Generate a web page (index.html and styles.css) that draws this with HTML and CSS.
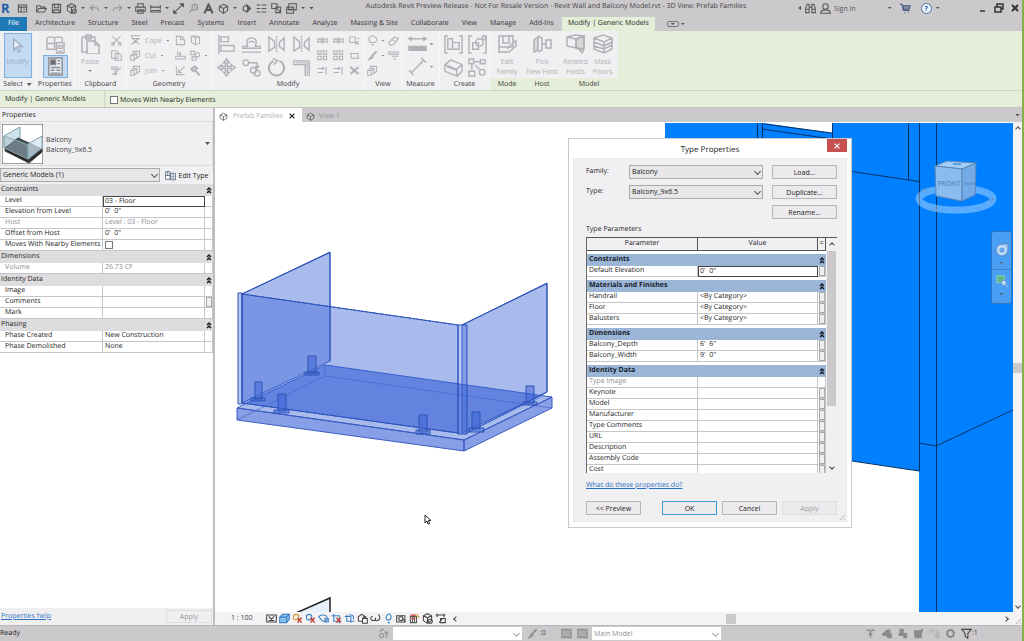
FILE: index.html
```
<!DOCTYPE html>
<html lang="en">
  <head>
    <meta charset="utf-8">
    <title>Autodesk Revit Preview Release</title>
    <link rel="stylesheet" href="styles.css">
  </head>

  <body>
    <!-- icon sheet -->
    <svg class="sheet" width="0" height="0">
      <symbol id="home" viewBox="0 0 16 16"><path d="M2 3h12v10H2zM2 6h12M6 6v7M9 9h3"/></symbol>
      <symbol id="open" viewBox="0 0 16 16"><path d="M1 13V4h5l1 2h6v2M1 13l3-5h11l-3 5z"/></symbol>
      <symbol id="save" viewBox="0 0 16 16"><path d="M2 2h12v12H2zM5 2v5h6V2M4 14v-4h8v4"/></symbol>
      <symbol id="sync" viewBox="0 0 16 16"><path d="M8 1l6 3v7l-6 4-6-4V4zM2 4l6 3 6-3M8 7v8"/><circle cx="12" cy="12" r="3"/></symbol>
      <symbol id="undo" viewBox="0 0 16 16"><path d="M6 3L2 7l4 4M2 7h8q4 0 4 5"/></symbol>
      <symbol id="redo" viewBox="0 0 16 16"><path d="M10 3l4 4-4 4M14 7H6q-4 0-4 5"/></symbol>
      <symbol id="print" viewBox="0 0 16 16"><path d="M4 6V1h8v5M1 6h14v6H1zM4 10h8v5H4z"/></symbol>
      <symbol id="dims" viewBox="0 0 16 16"><path d="M1 3v6M15 3v6M1 6h14M1 11h14v2H1z"/></symbol>
      <symbol id="line" viewBox="0 0 16 16"><path d="M3 13L13 3"/><path fill="currentColor" d="M1 11l4 4H1zM11 1h4v4z"/></symbol>
      <symbol id="tag" viewBox="0 0 16 16"><path d="M2 14l4-5M6 9V5q0-3 4-3t4 4-4 4H6zM10 5v3"/></symbol>
      <symbol id="text" viewBox="0 0 16 16"><path stroke-width="3" d="M2 15L8 2l6 13M4 10h8"/></symbol>
      <symbol id="cube" viewBox="0 0 16 16"><path d="M2 5l6-3 6 3v6l-6 4-6-4zM2 5l6 3 6-3M8 8v7"/></symbol>
      <symbol id="section" viewBox="0 0 16 16"><circle cx="7" cy="8" r="4"/><path fill="currentColor" d="M8 2l6 6-6 6 2-6z"/></symbol>
      <symbol id="thin" viewBox="0 0 16 16"><path d="M1 3h5M8 3h7M1 8h5M8 8h7M1 13h5M8 13h7"/></symbol>
      <symbol id="close" viewBox="0 0 16 16"><path d="M1 1h8v7H1zM7 6h7v8H7zM9 8l5 6"/></symbol>
      <symbol id="windows" viewBox="0 0 16 16"><path d="M4 1h11v9H4zM1 6h10v9H1zM1 9h10"/></symbol>
      <symbol id="binoc" viewBox="0 0 16 16"><path d="M1 14V8l2-6h3v12zM15 14V8l-2-6h-3v12zM6 6h4M1 9h5M10 9h5"/></symbol>
      <symbol id="user" viewBox="0 0 16 16"><circle cx="8" cy="5" r="4"/><path d="M1 15q0-4 5-5h4q5 1 5 5z"/></symbol>
      <symbol id="cart" viewBox="0 0 16 16"><path fill="currentColor" fill-opacity=".5" d="M4 4h11l-2 5H5z"/><path d="M0 2h3l2 9h9M6 14h1M12 14h1"/></symbol>
      <symbol id="cursor" viewBox="0 0 16 16"><path fill="#eef4fb" d="M4 1v12l3-3 2 5 2-1-2-5h4z"/></symbol>
      <symbol id="types" viewBox="0 0 20 20"><path d="M1 3q4-2 8 0 4-2 8 0v5M1 3v12h9M9 3v12M1 9h8M11 8h8v11h-8zM13 11h4v3h-4zM13 17h4"/></symbol>
      <symbol id="props" viewBox="0 0 20 20"><path fill="#e9eff6" d="M3 1h14v18H3z"/><path d="M5 3h5v5H5z" fill="#666"/><path d="M12 4h3M12 7h3M5 11h10M5 14h4M11 14h4M5 17h10"/></symbol>
      <symbol id="paste" viewBox="0 0 20 20"><path d="M2 3h13v4M2 3v15h5M6 1h5v4H6zM7 7h8l4 4v9H7zM15 7v4h4"/></symbol>
      <symbol id="cut" viewBox="0 0 16 16"><path d="M2 2l12 11M14 2L2 13"/><circle cx="3" cy="13" r="2"/><circle cx="13" cy="13" r="2"/></symbol>
      <symbol id="copy" viewBox="0 0 16 16"><path d="M1 1h7l2 2v9H1zM6 5h6l3 3v7H6z"/></symbol>
      <symbol id="match" viewBox="0 0 16 16"><path d="M1 3h8v3H1zM4 9h6M5 14l9-11M3 13l4-2 1 3z"/></symbol>
      <symbol id="cope" viewBox="0 0 16 16"><path d="M1 1h14M3 1v4l5 3-6 6M14 5L8 8l6 6M3 5h11M6 11h5"/></symbol>
      <symbol id="solid" viewBox="0 0 16 16"><path d="M1 8l4-3h5v6l-4 4H1zM5 5V2h9v7l-4 3M1 8h5v7M6 8l4-3"/></symbol>
      <symbol id="wallcut" viewBox="0 0 16 16"><path d="M2 2h6v5h6v7H2zM8 2l4 1v4"/></symbol>
      <symbol id="beam" viewBox="0 0 16 16"><path d="M4 1v5h4M1 9h14v4H1zM8 3v6"/></symbol>
      <symbol id="split" viewBox="0 0 16 16"><path d="M2 2v12h12M5 11l9-9M5 6v5h5"/></symbol>
      <symbol id="face" viewBox="0 0 16 16"><path d="M2 2l6 2v10l-6-3zM2 2l6-1 6 2v9l-6 2M8 4l6-1"/></symbol>
      <symbol id="shapes" viewBox="0 0 16 16"><path d="M1 2h6v5H1zM3 10h6v5H3z"/><circle cx="11" cy="7" r="3"/></symbol>
      <symbol id="hammer" viewBox="0 0 16 16"><path stroke-width="3" d="M2 6l5-4 3 3-5 4zM7 7l7 8"/></symbol>
      <symbol id="align" viewBox="0 0 20 20"><path d="M2 0v20M4 2h8v5H4zM4 11h14v6H4z"/></symbol>
      <symbol id="offset" viewBox="0 0 20 20"><path d="M0 12h6q-3-9 4-9t4 9h6v2H0zM0 18h20M7 8q3-3 6 0"/></symbol>
      <symbol id="mirror" viewBox="0 0 20 20"><path d="M2 2v15l6-4V7zM18 3v13l-5-4V8z"/><path stroke-dasharray="2 1" d="M10 1v18"/></symbol>
      <symbol id="move" viewBox="0 0 20 20"><path d="M10 1l3 4h-2v4h4V7l4 3-4 3v-2h-4v4h2l-3 4-3-4h2v-4H5v2l-4-3 4-3v2h4V5H7z"/></symbol>
      <symbol id="copy2" viewBox="0 0 20 20"><circle cx="4" cy="5" r="3"/><circle cx="12" cy="13" r="3"/><circle cx="16" cy="16" r="3"/><path d="M7 5h9v5M14 8l2 3 2-3"/></symbol>
      <symbol id="rotate" viewBox="0 0 20 20"><path stroke-width="2" d="M7 3a8 8 0 1 0 6 0"/><path d="M6 0l5 3-4 4"/></symbol>
      <symbol id="trim" viewBox="0 0 20 20"><path d="M1 3h17v16M1 7h13v12"/><path stroke-dasharray="2 1" d="M1 5h15v14"/></symbol>
      <symbol id="splitel" viewBox="0 0 16 16"><path d="M1 6h5v4H1zM10 6h5v4h-5zM8 3v10"/></symbol>
      <symbol id="array" viewBox="0 0 16 16"><path d="M1 1h5v5H1zM9 1h5v5H9zM1 9h5v5H1zM9 9h5v5H9z"/></symbol>
      <symbol id="extend" viewBox="0 0 16 16"><path d="M1 5h8M1 11h8M13 2v12M7 3l3 2-3 2"/></symbol>
      <symbol id="pin" viewBox="0 0 16 16"><path d="M1 3h8v8H1zM9 9l5 5M14 9l-5 5M11 5h4"/></symbol>
      <symbol id="scale" viewBox="0 0 16 16"><path d="M3 5h10v7H3zM1 5h2M13 12h2"/></symbol>
      <symbol id="del" viewBox="0 0 16 16"><path stroke-width="3" d="M2 3l12 10M14 3L2 13"/></symbol>
      <symbol id="bulb" viewBox="0 0 16 16"><path d="M5 11q-4-4-1-8t8 0-1 8zM6 14h4"/></symbol>
      <symbol id="brush" viewBox="0 0 16 16"><path stroke-width="3" d="M14 2L7 9"/><path d="M7 8l2 3-7 4z" fill="currentColor"/></symbol>
      <symbol id="eraser" viewBox="0 0 16 16"><path d="M1 11l8-8 6 2-6 8-6 2zM6 7l6 3"/></symbol>
      <symbol id="linework" viewBox="0 0 16 16"><path d="M1 3h14v3H1zM5 9h10M8 13h4"/></symbol>
      <symbol id="measure" viewBox="0 0 20 20"><path d="M1 4h18M4 2L1 4l3 2M16 2l3 2-3 2"/><path fill="currentColor" d="M1 12h18v4H1z"/></symbol>
      <symbol id="diag" viewBox="0 0 20 20"><path d="M3 17L17 3M1 14l5 5M14 1l5 5"/></symbol>
      <symbol id="assembly" viewBox="0 0 20 20"><path d="M4 1H1v18h3M16 1h3v18h-3M4 4h5v11H4zM9 8h7v7H9z"/></symbol>
      <symbol id="parts" viewBox="0 0 20 20"><path d="M4 1H1v18h3M16 1h3v18h-3M5 8h6v7H5z"/><circle cx="12" cy="8" r="4"/><circle cx="17" cy="3" r="2"/></symbol>
      <symbol id="box" viewBox="0 0 20 20"><path d="M1 7l6-5 12 5v7l-5 5-13-5zM1 7l12 5 6-5M13 12l1 7M3 9l11 4"/></symbol>
      <symbol id="similar" viewBox="0 0 20 20"><path d="M1 1h5v5H1zM13 2h5v4h-5zM1 14h6v5H1zM7 4h5M4 7v5M8 8l4 4"/><circle cx="15" cy="15" r="3"/></symbol>
      <symbol id="editfam" viewBox="0 0 20 20"><path d="M2 2h14v11H2zM6 2v7h6V2M2 13v5h10l7-6V6M10 15l8-8"/></symbol>
      <symbol id="host" viewBox="0 0 20 20"><path fill="currentColor" fill-opacity=".4" d="M2 6l4-3v13l-4 2z"/><path d="M6 2l4 2v12l-4 2M10 10h4"/><path d="M14 6h5v8h-5z"/></symbol>
      <symbol id="hosts" viewBox="0 0 20 20"><path d="M1 3l9 2 8-3v12l-3 2-5-2-9-2zM10 5v9M1 3l8-2 9 1"/><path fill="currentColor" fill-opacity=".4" d="M10 5l8-3v12l-3 1-5-2z"/><path d="M13 15l3 4 2-4"/></symbol>
      <symbol id="mass" viewBox="0 0 20 20"><path d="M1 4l9-3 9 3v11l-8 4-10-4zM1 4l10 4 8-4M11 8v11M1 8l10 4 8-4M1 12l10 3 8-4"/></symbol>
      <symbol id="edittype" viewBox="0 0 20 20"><path fill="#fff" d="M1 3h8v14H1zM10 6h9v12h-9z"/><path d="M1 10h8M12 9h5M12 12h5M12 15h5M5 3v7"/></symbol>
      <symbol id="up2" viewBox="0 0 8 8"><path d="M2 4l2-2 2 2M2 7l2-2 2 2"/></symbol>
      <symbol id="glasses" viewBox="0 0 16 16"><path d="M1 6q0 5 4 5t3-4q-1 5 3 4t3-7M1 6l3-1M12 2l2 2"/></symbol>
      <symbol id="crop" viewBox="0 0 16 16"><path d="M1 4h12v9H1zM9 8l5 5"/><circle cx="7" cy="8" r="3"/></symbol>
      <symbol id="select" viewBox="0 0 16 16"><path stroke-width="2" d="M2 4q5-3 6 2 1-5 6-2M8 6v8M5 9h6"/></symbol>
      <symbol id="worksets" viewBox="0 0 16 16"><circle cx="5" cy="11" r="3"/><path d="M3 6q0-4 6-4M9 6h6M12 6v8M12 8q2 0 3 2"/></symbol>
      <symbol id="blob" viewBox="0 0 16 16"><path fill="currentColor" d="M2 9l7-6h4v5l2 1v5h-5l-2-3H4z"/></symbol>
      <symbol id="blob2" viewBox="0 0 16 16"><path fill="currentColor" d="M4 2h5v6h5v6h-4v-3H3V8h2z"/></symbol>
      <symbol id="blob3" viewBox="0 0 16 16"><path fill="currentColor" d="M2 4h8l4-2-2 7v5H3z"/></symbol>
      <symbol id="grid" viewBox="0 0 16 16"><path fill="#a1a0a2" d="M1 2h14v12H1z"/><path stroke="#b5b4b6" d="M2 6h12M2 10h12"/></symbol>
      <symbol id="filter" viewBox="0 0 16 16"><path d="M1 2h14L10 8v7l-4-3V8z"/></symbol>
      <symbol id="gear" viewBox="0 0 16 16"><circle cx="8" cy="8" r="5" stroke-width="3"/></symbol>
    </svg>

    <div class="app">
      <header class="titlebar">
        <div class="qat">
          <b class="logo">R</b>
          <button aria-label="Home"><svg><use href="#home"/></svg></button>
          <i class="space"></i>
          <button aria-label="Open"><svg><use href="#open"/></svg></button>
          <button aria-label="Save"><svg><use href="#save"/></svg></button>
          <button aria-label="Sync"><svg><use href="#sync"/></svg></button>
          <i class="arrow"></i>
          <button class="faint" aria-label="Undo"><svg><use href="#undo"/></svg></button>
          <i class="arrow"></i>
          <button class="faint" aria-label="Redo"><svg><use href="#redo"/></svg></button>
          <i class="arrow"></i>
          <button aria-label="Print"><svg><use href="#print"/></svg></button>
          <button aria-label="Measure"><svg><use href="#dims"/></svg></button>
          <i class="arrow"></i>
          <button aria-label="Dimension"><svg><use href="#line"/></svg></button>
          <button class="faint" aria-label="Tag"><svg><use href="#tag"/></svg></button>
          <button aria-label="Text"><svg><use href="#text"/></svg></button>
          <button aria-label="3D view"><svg><use href="#cube"/></svg></button>
          <i class="arrow"></i>
          <button aria-label="Section"><svg><use href="#section"/></svg></button>
          <button aria-label="Thin lines"><svg><use href="#thin"/></svg></button>
          <button aria-label="Close hidden"><svg><use href="#close"/></svg></button>
          <button aria-label="Switch windows"><svg><use href="#windows"/></svg></button>
          <i class="arrow"></i>
          <i class="arrow wide"></i>
        </div>
        <div class="caption">Autodesk Revit Preview Release - Not For Resale Version - Revit Wall and Balcony Model.rvt - 3D View: Prefab Families</div>
        <div class="infocenter">
          <i class="arrow left"></i>
          <button aria-label="Search"><svg><use href="#binoc"/></svg></button>
          <button class="signin"><svg><use href="#user"/></svg>Sign In</button>
          <i class="arrow"></i>
          <button class="cart" aria-label="Store"><svg><use href="#cart"/></svg></button>
          <button class="help" aria-label="Help">?</button>
          <i class="arrow"></i>
        </div>
        <div class="winbtns">
          <button aria-label="Minimize"><svg viewBox="0 0 10 10"><path d="M2 8h5"/></svg></button>
          <button aria-label="Restore"><svg viewBox="0 0 10 10"><path d="M3 4V1h6v5H7M1 4h6v5H1z"/></svg></button>
          <button aria-label="Close"><svg viewBox="0 0 10 10"><path stroke-width="2" d="M2 2l6 6M8 2L2 8"/></svg></button>
        </div>
      </header>

      <nav class="tabs">
        <a class="file" href="#">File</a>
        <a href="#">Architecture</a>
        <a href="#">Structure</a>
        <a href="#">Steel</a>
        <a href="#">Precast</a>
        <a href="#">Systems</a>
        <a href="#">Insert</a>
        <a href="#">Annotate</a>
        <a href="#">Analyze</a>
        <a href="#">Massing &amp; Site</a>
        <a href="#">Collaborate</a>
        <a href="#">View</a>
        <a href="#">Manage</a>
        <a href="#">Add-Ins</a>
        <a class="active" href="#">Modify | Generic Models</a>
        <button class="cycle" aria-label="Cycle ribbon"><i class="arrow"></i></button>
        <i class="arrow"></i>
      </nav>

      <div class="ribbon">
        <section class="panel select">
          <div class="tools"><button class="tall on"><svg><use href="#cursor"/></svg>Modify</button></div>
          <h2>Select <i class="arrow wide"></i></h2>
        </section>
        <section class="panel properties">
          <div class="tools stack">
            <button class="big" aria-label="Type properties"><svg><use href="#types"/></svg></button>
            <button class="big on" aria-label="Properties"><svg><use href="#props"/></svg></button>
          </div>
          <h2>Properties</h2>
        </section>
        <section class="panel clipboard">
          <div class="tools">
            <button class="tall"><svg><use href="#paste"/></svg>Paste<i class="arrow"></i></button>
            <div class="col">
              <button aria-label="Cut"><svg><use href="#cut"/></svg></button>
              <button aria-label="Copy"><svg><use href="#copy"/></svg></button>
              <button aria-label="Match"><svg><use href="#match"/></svg></button>
            </div>
          </div>
          <h2>Clipboard</h2>
        </section>
        <section class="panel geometry">
          <div class="tools">
            <div class="col words">
              <button><svg><use href="#cope"/></svg>Cope<i class="arrow"></i></button>
              <button><svg><use href="#solid"/></svg>Cut<i class="arrow"></i></button>
              <button><svg><use href="#solid"/></svg>Join<i class="arrow"></i></button>
            </div>
            <div class="col">
              <button aria-label="Wall opening"><svg><use href="#wallcut"/></svg></button>
              <button aria-label="Beam joins"><svg><use href="#beam"/></svg></button>
              <button aria-label="Wall joins"><svg><use href="#split"/></svg></button>
            </div>
            <div class="col more">
              <button aria-label="Split face"><svg><use href="#face"/></svg></button>
              <button aria-label="Paint"><svg><use href="#shapes"/></svg><i class="arrow"></i></button>
              <button aria-label="Demolish"><svg><use href="#hammer"/></svg></button>
            </div>
          </div>
          <h2>Geometry</h2>
        </section>
        <section class="panel modify">
          <div class="tools">
            <div class="bigs">
              <button class="big" aria-label="Align"><svg><use href="#align"/></svg></button>
              <button class="big" aria-label="Offset"><svg><use href="#offset"/></svg></button>
              <button class="big" aria-label="Mirror axis"><svg><use href="#mirror"/></svg></button>
              <button class="big" aria-label="Mirror draw"><svg><use href="#mirror"/></svg></button>
              <button class="big" aria-label="Move"><svg><use href="#move"/></svg></button>
              <button class="big" aria-label="Copy"><svg><use href="#copy2"/></svg></button>
              <button class="big" aria-label="Rotate"><svg><use href="#rotate"/></svg></button>
              <button class="big" aria-label="Trim"><svg><use href="#trim"/></svg></button>
            </div>
            <div class="col">
              <button aria-label="Split"><svg><use href="#splitel"/></svg></button>
              <button aria-label="Array"><svg><use href="#array"/></svg></button>
              <button aria-label="Extend"><svg><use href="#extend"/></svg></button>
            </div>
            <div class="col">
              <button aria-label="Split with gap"><svg><use href="#splitel"/></svg></button>
              <button aria-label="Group"><svg><use href="#array"/></svg></button>
              <button aria-label="Extend many"><svg><use href="#extend"/></svg></button>
            </div>
            <div class="col">
              <button aria-label="Unpin"><svg><use href="#pin"/></svg></button>
              <button aria-label="Scale"><svg><use href="#scale"/></svg></button>
              <button aria-label="Delete"><svg><use href="#del"/></svg></button>
            </div>
          </div>
          <h2>Modify</h2>
        </section>
        <section class="panel view">
          <div class="tools">
            <div class="col more">
              <button aria-label="Hide"><svg><use href="#bulb"/></svg><i class="arrow"></i></button>
              <button aria-label="Override"><svg><use href="#brush"/></svg><i class="arrow"></i></button>
              <button aria-label="Displace"><svg><use href="#solid"/></svg></button>
            </div>
            <div class="col">
              <button aria-label="Selection box"><svg><use href="#eraser"/></svg></button>
              <button aria-label="Linework"><svg><use href="#linework"/></svg></button>
            </div>
          </div>
          <h2>View</h2>
        </section>
        <section class="panel measure">
          <div class="tools stack">
            <button class="big" aria-label="Measure"><svg><use href="#measure"/></svg><i class="arrow"></i></button>
            <button class="big" aria-label="Aligned"><svg><use href="#diag"/></svg><i class="arrow"></i></button>
          </div>
          <h2>Measure</h2>
        </section>
        <section class="panel create">
          <div class="tools">
            <div class="bigs">
              <button class="big" aria-label="Assembly"><svg><use href="#assembly"/></svg></button>
              <button class="big" aria-label="Parts"><svg><use href="#parts"/></svg></button>
              <button class="big" aria-label="Group"><svg><use href="#box"/></svg></button>
              <button class="big" aria-label="Similar"><svg><use href="#similar"/></svg></button>
            </div>
          </div>
          <h2>Create</h2>
        </section>
        <section class="panel context mode">
          <div class="tools"><button class="tall"><svg><use href="#editfam"/></svg>Edit<br>Family</button></div>
          <h2>Mode</h2>
        </section>
        <section class="panel context hostp">
          <div class="tools"><button class="tall"><svg><use href="#host"/></svg>Pick<br>New Host</button></div>
          <h2>Host</h2>
        </section>
        <section class="panel context model">
          <div class="tools">
            <button class="tall"><svg><use href="#hosts"/></svg>Related<br>Hosts</button>
            <button class="tall"><svg><use href="#mass"/></svg>Mass<br>Floors</button>
          </div>
          <h2>Model</h2>
        </section>
      </div>

      <div class="options">
        <span class="what">Modify | Generic Models</span>
        <label><input type="checkbox">Moves With Nearby Elements</label>
      </div>

      <main>
        <aside class="palette">
          <h3>Properties</h3>
          <button class="typesel">
            <svg class="thumb" viewBox="0 0 41 40">
              <path fill="#fff" d="M0 0h41v40H0z"/>
              <path fill="#cfe2ee" stroke="#7fa0b0" d="M2 12L18 3v13L2 24z"/>
              <path fill="#4d565f" stroke="#333" d="M3 24l13-10 24 11-13 11z"/>
              <path fill="#222" d="M3 24l24 12v3L3 27zM40 25L27 36v3l13-11z"/>
              <path fill="#9fb6c6" fill-opacity=".4" stroke="#8aa" d="M2 12l24 9v14L2 24z"/>
              <path fill="#cfe2ee" fill-opacity=".7" stroke="#7fa0b0" d="M26 20l14-8v12l-14 11z"/>
            </svg>
            <span>Balcony<br>Balcony_9x6.5</span>
            <i class="arrow wide"></i>
          </button>
          <div class="filterrow">
            <span class="drop"><select aria-label="Filter"><option>Generic Models (1)</option></select></span>
            <button><svg><use href="#edittype"/></svg>Edit Type</button>
          </div>
          <table class="params">
            <colgroup><col class="name"><col><col class="end"></colgroup>
            <tr class="group"><th colspan="2">Constraints</th><th><svg><use href="#up2"/></svg></th></tr>
            <tr><td>Level</td><td class="focus">03 - Floor</td><td></td></tr>
            <tr><td>Elevation from Level</td><td>0'&nbsp; 0"</td><td></td></tr>
            <tr class="off"><td>Host</td><td>Level : 03 - Floor</td><td></td></tr>
            <tr><td>Offset from Host</td><td>0'&nbsp; 0"</td><td></td></tr>
            <tr><td><label for="nearby">Moves With Nearby Elements</label></td><td><input type="checkbox" id="nearby"></td><td></td></tr>
            <tr class="group"><th colspan="2">Dimensions</th><th><svg><use href="#up2"/></svg></th></tr>
            <tr class="off"><td>Volume</td><td>26.73 CF</td><td></td></tr>
            <tr class="group"><th colspan="2">Identity Data</th><th><svg><use href="#up2"/></svg></th></tr>
            <tr><td>Image</td><td></td><td></td></tr>
            <tr><td>Comments</td><td></td><td><button aria-label="Browse"></button></td></tr>
            <tr><td>Mark</td><td></td><td></td></tr>
            <tr class="group"><th colspan="2">Phasing</th><th><svg><use href="#up2"/></svg></th></tr>
            <tr><td>Phase Created</td><td>New Construction</td><td></td></tr>
            <tr><td>Phase Demolished</td><td>None</td><td></td></tr>
          </table>
          <div class="helprow">
            <a href="#">Properties help</a>
            <button disabled>Apply</button>
          </div>
        </aside>

        <div class="document">
          <div class="viewtabs">
            <div class="vtab current"><svg><use href="#cube"/></svg>Prefab Families<button aria-label="Close view"><svg viewBox="0 0 10 10"><path d="M2 2l6 6M8 2L2 8"/></svg></button></div>
            <div class="vtab"><svg><use href="#cube"/></svg>View 1</div>
            <i class="arrow wide"></i>
          </div>

          <div class="canvas">
            <svg class="scene" viewBox="215 122 798 491" preserveAspectRatio="xMinYMin slice">
              <!-- wall -->
              <g class="wall">
                <path class="face" d="M665 123H1013V613H919V471L852 461 665 436z"/>
                <path class="hole" d="M764 123H832V133z"/>
                <path d="M757.500 123V140M762.500 123V140M764 124L832 133M762 129L832 139M832.500 123V140"/>
                <path d="M852 171.500L919 181.500M908.500 123V180M919.500 123V471M936.500 123V613M852 461L919 471M919 443L936 446 1013 410"/>
              </g>
              <!-- balcony below, cut by the view edge -->
              <path class="cutoff" d="M296 613L330 598V614z"/>
              <!-- slab -->
              <g class="balcony">
                <path d="M237 408L325 365 552 397 464 440z"/>
                <path class="side" d="M237 408L464 440V451L237 420zM464 440L552 397V408L464 451z"/>
                <path class="edge" d="M237 420L325 376 552 408M325 365V376"/>
                <path class="deep" d="M242 403L325 365 545 396 464 434z"/>
                <!-- glass -->
                <path d="M242 294L330 252V361L242 403z"/>
                <path d="M242 294L458 325V433L242 403z"/>
                <path d="M462 325L547 283V392L462 433z"/>
                <path class="deep" d="M238 293H242V404H238zM458 325H467V434H458z"/>
                <path class="rim" d="M242 294L330 252.500V361M462 325L547 283.500V392L467 433M458 325H467V434H458zM238 293H242V404H238z"/>
                <path class="rim dash" d="M242 294L458 325M242 403L458 433"/>
                <!-- balusters -->
                <g class="post">
                  <path d="M308 356h8v17h-8zM305 372h14v3h-14z"/>
                  <path d="M255 382h7v17h-7zM251 398h14v3h-14z"/>
                  <path d="M278 394h8v17h-8zM274 410h15v3h-15z"/>
                  <path d="M419 415h8v17h-8zM416 430h14v4h-14z"/>
                  <path d="M472 412h8v17h-8zM469 428h15v4h-15z"/>
                  <path d="M526 386h8v17h-8zM523 402h14v3h-14z"/>
                </g>
              </g>
              <path class="pointer" d="M425 515v8l2-2 1 3 1.500-.5-1-3h2.500z"/>
              <!-- view cube -->
              <g class="viewcube">
                <ellipse cx="956" cy="199" rx="37" ry="11"/>
                <path class="top" d="M935 166L947 161 976 163 962 169z"/>
                <path class="front" d="M935 166L962 169V201L936 196z"/>
                <path class="side" d="M962 169L976 163 975 195 962 201z"/>
                <path class="mark" d="M930 210h9M988 201l6-2M921 191l6-2M953 164h8"/>
                <text x="938" y="186">FRONT</text>
                <text class="right" x="964" y="185">RIGHT</text>
              </g>
            </svg>
            <div class="navbar">
              <button aria-label="Steering wheel"><svg viewBox="0 0 16 16"><path fill="#9cc8f3" d="M1 8a7 7 0 0 1 7-7h7v7a7 7 0 0 1-14 0z"/><circle cx="8" cy="8" r="4" fill="#6ba9ea" stroke="#dbe9f7" stroke-width="1.500"/></svg></button>
              <i class="arrow"></i>
              <hr>
              <button aria-label="Zoom"><svg viewBox="0 0 16 16"><path fill="#5fb88c" stroke="#8fd3c4" d="M2 2h9v8H2z"/><circle cx="10" cy="10" r="3" fill="#bde0f5"/><path stroke="#bde0f5" d="M12 12l3 3"/></svg></button>
              <i class="arrow"></i>
            </div>
          </div>
          <div class="vscroll"><i class="chev up"></i><i class="thumb"></i><i class="chev down"></i></div>

          <div class="viewbar">
            <span class="scale">1 : 100</span>
            <button aria-label="Detail level"><svg viewBox="0 0 16 16"><path d="M1 3h14v10H1zM4 5l4 4 4-4M4 11h8"/></svg></button>
            <button class="blue" aria-label="Visual style"><svg viewBox="0 0 16 16"><path fill="#8cc4ef" d="M1 6l4-4h10v7l-4 5H1zM1 6h10v8M11 6l4-4"/></svg></button>
            <button class="sun" aria-label="Sun path"><svg viewBox="0 0 16 16"><circle cx="6" cy="6" r="4"/><path class="no" d="M8 7l6 7M14 7l-6 7"/></svg></button>
            <button class="blue" aria-label="Shadows"><svg viewBox="0 0 16 16"><circle cx="6" cy="6" r="4"/><path class="no" d="M8 7l6 7M14 7l-6 7"/></svg></button>
            <button class="blue" aria-label="Render"><svg viewBox="0 0 16 16"><path d="M1 5q6-4 12 0v6q-5 3-8-1zM10 8h5v5h-5z"/></svg></button>
            <button class="blue" aria-label="Crop view"><svg viewBox="0 0 16 16"><path d="M4 1v11h11M1 4h11v11"/><path class="no" d="M8 7l6 7M14 7l-6 7"/></svg></button>
            <button class="blue" aria-label="Crop region"><svg viewBox="0 0 16 16"><path d="M4 3v9h11M1 5h9v9M7 3h4q3 0 3 6"/></svg></button>
            <button aria-label="Locked view"><svg viewBox="0 0 16 16"><path d="M2 12V5l5-3 5 3v3M8 8h7v7H8zM9 8V6h4v2M2 12h5"/></svg></button>
            <button aria-label="Hide isolate"><svg><use href="#glasses"/></svg></button>
            <button class="blue" aria-label="Reveal"><svg viewBox="0 0 16 16"><path d="M6 10q-3-4 0-7t5 0-1 7zM7 14h3"/></svg></button>
            <button aria-label="View properties"><svg><use href="#crop"/></svg></button>
            <button class="sun" aria-label="Analytical"><svg viewBox="0 0 16 16"><path stroke="#555" d="M2 14V5h9v9zM5 5v9M8 5v9"/><path class="no" d="M2 3h8M4 8h5"/><path d="M11 2l4 5"/></svg></button>
            <button aria-label="Displacement"><svg><use href="#sync"/></svg></button>
            <button aria-label="Constraints"><svg viewBox="0 0 16 16"><path d="M1 3h14M3 1v5M13 1v5M8 8h7v6H8zM6 14l5-6"/></svg></button>
            <i class="chev back"></i>
            <div class="hscroll"><i class="thumb"></i><i class="chev next"></i></div>
            <i class="grip"></i>
          </div>
        </div>
      </main>

      <footer class="status">
        <span class="ready">Ready</span>
        <svg class="faint"><use href="#worksets"/></svg>
        <span class="drop"><select aria-label="Workset"><option></option></select></span>
        <span class="count"><svg class="faint"><use href="#brush"/></svg>:0</span>
        <svg class="faint"><use href="#grid"/></svg>
        <svg class="faint"><use href="#grid"/></svg>
        <span class="drop"><select class="faint" aria-label="Design option"><option>Main Model</option></select></span>
        <span class="filters">
          <svg><use href="#select"/></svg>
          <svg><use href="#blob"/></svg>
          <svg><use href="#blob2"/></svg>
          <svg><use href="#blob3"/></svg>
          <svg class="dim"><use href="#copy2"/></svg>
          <svg><use href="#gear"/></svg>
          <span class="count"><svg><use href="#filter"/></svg>:1</span>
        </span>
      </footer>

      <div class="dialog" role="dialog" aria-labelledby="dlgtitle">
        <div class="dlghead">
          <span id="dlgtitle">Type Properties</span>
          <button aria-label="Close"><svg viewBox="0 0 10 10"><path d="M2 2l6 6M8 2L2 8"/></svg></button>
        </div>
        <div class="dlgbody">
          <div class="fields">
            <label for="family">Family:</label>
            <span class="drop"><select id="family"><option>Balcony</option></select></span>
            <button>Load...</button>
            <label for="type">Type:</label>
            <span class="drop"><select id="type"><option>Balcony_9x6.5</option></select></span>
            <button>Duplicate...</button>
            <button class="rename">Rename...</button>
          </div>
          <p>Type Parameters</p>
          <div class="tablebox">
            <table>
              <colgroup><col class="name"><col><col class="end"></colgroup>
              <tr class="head"><th>Parameter</th><th>Value</th><th>=</th></tr>
              <tr class="gap"><td colspan="3"></td></tr>
              <tr class="group"><th colspan="2">Constraints</th><th><svg><use href="#up2"/></svg></th></tr>
              <tr><td>Default Elevation</td><td class="focus">0'&nbsp; 0"</td><td><button aria-label="Link"></button></td></tr>
              <tr class="gap"><td colspan="3"></td></tr>
              <tr class="group"><th colspan="2">Materials and Finishes</th><th><svg><use href="#up2"/></svg></th></tr>
              <tr><td>Handrail</td><td>&lt;By Category&gt;</td><td><button aria-label="Link"></button></td></tr>
              <tr><td>Floor</td><td>&lt;By Category&gt;</td><td><button aria-label="Link"></button></td></tr>
              <tr><td>Balusters</td><td>&lt;By Category&gt;</td><td><button aria-label="Link"></button></td></tr>
              <tr class="gap"><td colspan="3"></td></tr>
              <tr class="group"><th colspan="2">Dimensions</th><th><svg><use href="#up2"/></svg></th></tr>
              <tr><td>Balcony_Depth</td><td>6'&nbsp; 6"</td><td><button aria-label="Link"></button></td></tr>
              <tr><td>Balcony_Width</td><td>9'&nbsp; 0"</td><td><button aria-label="Link"></button></td></tr>
              <tr class="gap"><td colspan="3"></td></tr>
              <tr class="group"><th colspan="2">Identity Data</th><th><svg><use href="#up2"/></svg></th></tr>
              <tr class="off"><td>Type Image</td><td></td><td></td></tr>
              <tr><td>Keynote</td><td></td><td><button aria-label="Link"></button></td></tr>
              <tr><td>Model</td><td></td><td><button aria-label="Link"></button></td></tr>
              <tr><td>Manufacturer</td><td></td><td><button aria-label="Link"></button></td></tr>
              <tr><td>Type Comments</td><td></td><td><button aria-label="Link"></button></td></tr>
              <tr><td>URL</td><td></td><td><button aria-label="Link"></button></td></tr>
              <tr><td>Description</td><td></td><td><button aria-label="Link"></button></td></tr>
              <tr><td>Assembly Code</td><td></td><td><button aria-label="Link"></button></td></tr>
              <tr><td>Cost</td><td></td><td><button aria-label="Link"></button></td></tr>
            </table>
            <div class="dlgscroll"><i class="chev up"></i><i class="thumb"></i><i class="chev down"></i></div>
          </div>
          <a href="#">What do these properties do?</a>
          <div class="buttons">
            <button>&lt;&lt; Preview</button>
            <button class="ok">OK</button>
            <button>Cancel</button>
            <button disabled>Apply</button>
          </div>
          <i class="grip"></i>
        </div>
      </div>
    </div>
  </body>
</html>
```
FILE: styles.css
```
* {box-sizing:border-box;}
html, body {height:100%; margin:0;}
body {font:7px/11px "Open Sans", "Noto Sans", sans-serif; color:#222; text-rendering:geometricPrecision; overflow:hidden;}
button, select, input {font:inherit; color:inherit; margin:0; padding:0;}
button {background:none; border:0; display:flex; align-items:center; justify-content:center; white-space:nowrap;}
svg {fill:none; stroke:currentColor; stroke-width:1.5; flex:none; display:block;}
h2, h3, p {font-size:7px; font-weight:normal; margin:0;}
.sheet {position:absolute;}
.faint {color:#929194;}

.app {position:relative; height:100%; display:flex; flex-direction:column; border-right:2px solid #86b04a; background:#cbc9cb;}

/* small marks */
.arrow {flex:none; width:4px; height:2px; background:#555; clip-path:polygon(0 0, 100% 0, 50% 100%);}
.arrow.wide {width:5px; height:3px;}
.arrow.left {width:3px; height:4px; clip-path:polygon(100% 0, 100% 100%, 0 50%);}
.chev {flex:none; width:4px; height:4px; border:solid #444; border-width:1px 0 0 1px; transform:rotate(45deg);}
.chev.down {transform:rotate(225deg);}
.chev.next {transform:rotate(135deg);}
.chev.back {transform:rotate(-45deg);}
.grip {width:7px; height:7px; background:repeating-linear-gradient(135deg, #bbb 0 1px, #eee 1px 3px); clip-path:polygon(100% 0, 100% 100%, 0 100%);}
.drop {position:relative; display:block;}
.drop select {display:block; appearance:none; width:100%; height:14px; line-height:12px; padding:0 2px; border:1px solid #aaa; border-radius:0; background:#e7e6e8;}
.drop::after {content:""; position:absolute; right:3px; top:4px; width:4px; height:4px; border:solid #555; border-width:0 1px 1px 0; transform:rotate(45deg);}

/* title bar */
.titlebar {flex:none; height:17px; display:flex; align-items:center; color:#58575b; padding-bottom:1px;}
.qat {display:flex; align-items:center; gap:4px; padding-left:1px;}
.qat svg, .infocenter svg {width:11px; height:11px;}
.qat .space {width:0;}
.logo {width:12px; font-size:13px; line-height:16px; color:#1c5fa5;}
.caption {flex:1; text-align:center; white-space:nowrap; line-height:12px; color:#454448; padding-bottom:2px;}
.infocenter {display:flex; align-items:center; gap:4px; width:180px;}
.signin {gap:3px; margin-right:28px;}
.cart {color:#465a80; margin-left:4px;}
.help {width:11px; height:11px; margin-left:6px; border:1px solid #4a6fa5; border-radius:50%; background:#eef3fa; color:#24549a; font-weight:bold;}
.winbtns {display:flex; gap:6px; margin-right:2px; color:#333;}
.winbtns svg {width:10px; height:10px;}

/* ribbon tabs */
.tabs {flex:none; height:14px; display:flex; align-items:center; gap:1px;}
.tabs a {color:#333237; text-decoration:none; padding:0 6px; line-height:14px; white-space:nowrap;}
.tabs .file {width:27px; margin-right:1px; text-align:center; background:#1f7ab8; color:#fff;}
.tabs .active {background:#e4eed9; color:#222; padding:0 6px; margin-left:1px;}
.cycle {width:12px; height:6px; margin:0 1px 0 11px; border:1px solid #77767a; border-radius:2px;}

/* ribbon */
.ribbon {flex:none; height:60px; display:flex; background:#e4eed9; border-bottom:1px solid #cfd6c8;}
.panel {flex:none; background:#f0eff2; display:flex; flex-direction:column; border-right:1px solid #f7f6f9; color:#b2b1b5;}
.panel h2 {color:#3c3b40; height:12px; padding-top:1px; display:flex; align-items:center; justify-content:center; gap:4px; white-space:nowrap;}
.tools {height:47px; padding-top:2px; display:flex; justify-content:center;}
.tools.stack {flex-direction:column; justify-content:flex-start; align-items:center;}
.tools .arrow {background:#88878b;}
.col {width:16px;}
.col button {height:15px; width:100%; gap:3px;}
.col svg {width:11px; height:11px;}
.col.more {width:22px;}
.col.more button {justify-content:flex-start; padding-left:2px;}
.col.words {width:45px;}
.col.words button {justify-content:flex-start; gap:4px; padding-left:3px;}
.big {width:25px; height:23px; gap:3px;}
.big svg {width:19px; height:19px;}
.bigs {display:grid; grid-template-columns:repeat(4, 25px); align-content:start;}
.tall {flex-direction:column; justify-content:flex-start; line-height:10px; padding-top:1px; height:45px;}
.tall svg {width:20px; height:20px; margin-bottom:3px;}
.tall .arrow {margin-top:3px;}
.on {background:#c3daf3; border:1px solid #7fb0e0;}
.select {width:36px;}
.select .tall {width:28px; padding-top:2px; color:#9fb0c4;}
.select .tall svg {width:15px; height:15px; margin:2px 0 4px;}
.properties {width:39px;}
.properties .on {color:#8a8c92;}
.clipboard {width:52px;}
.clipboard .tall {width:26px; margin-right:5px;}
.geometry {width:85px;}
.geometry .tools {justify-content:flex-start;}
.modify {width:153px;}
.view {width:37px;}
.measure {width:38px;}
.measure .big {width:34px;}
.create {width:50px;}
.create .bigs {grid-template-columns:repeat(2, 24px);}
.context {background:#e4eed9; border:0;}
.context .tools {background:#f0eff2;}
.mode {width:34px;}
.hostp {width:36px;}
.model {width:58px;}
.model .tall {width:27px;}

/* options bar */
.options {flex:none; height:17px; display:flex; align-items:center; background:#e4eed9; border-bottom:1px solid #c4c6c0; color:#222;}
.options .what {width:105px; padding:2px 0 0 5px; line-height:14px; border-right:1px solid #cfd6c8;}
.options label {display:flex; align-items:center; gap:2px; padding:2px 0 0 5px;}
input[type=checkbox] {appearance:none; width:8px; height:8px; border:1px solid #777; background:#fff; display:block;}

main {flex:1; min-height:0; display:flex;}

/* properties palette */
.palette {flex:none; width:215px; display:flex; flex-direction:column; background:#fff; border-right:2px solid #bfbdc0;}
.palette h3 {background:#f0eff1; padding:2px 2px 0; height:13px; line-height:11px;}
.typesel {height:45px; padding:0 2px 0 1px; background:#f0eff1; border:1px solid #dddcde; justify-content:flex-start; text-align:left; line-height:10px; color:#444;}
.typesel .thumb {width:41px; height:40px; stroke-width:1;}
.typesel span {flex:1; padding:2px 0 0 3px;}
.filterrow {display:flex; height:18px; background:#f0eff1; align-items:center;}
.filterrow .drop {width:160px;}
.filterrow button {flex:1; gap:3px; color:#222;}
.filterrow svg {width:11px; height:11px; color:#55657a;}
table {border-collapse:separate; border-spacing:0; table-layout:fixed; width:100%;}
td, th {padding:0; height:11px; line-height:10px; text-align:left; font-weight:normal; white-space:nowrap; overflow:hidden;}
td {border:solid #c6c5c7; border-width:0 1px 1px 0;}
td button {width:6px; height:10px; border:1px solid #aaa; background:#efeef0; margin-left:1px;}
th svg {width:8px; height:8px; margin:0 auto;}
.off td {color:#8d8c8f;}
td.focus {border:1px solid #444; line-height:9px;}
.palette .name {width:103px;}
.palette .end {width:8px;}
.palette td:first-child {padding-left:5px;}
.palette td:nth-child(2) {padding-left:2px;}
.palette td.focus {padding-left:1px;}
.palette .group th {background:#dddcde; height:12px; padding-left:1px;}
.palette .group th:last-child {padding:0;}
.helprow {margin-top:auto; height:17px; display:flex; justify-content:space-between; align-items:center; background:#f0eff1;}
.helprow a {padding-left:1px;}
a {color:#2a6fc0;}
.helprow button {width:46px; height:13px; margin-right:1px; border:1px solid #dddcde; color:#99989b;}

/* document */
.document {flex:1; min-width:0; display:grid; grid-template-columns:1fr 9px; grid-template-rows:14px 1fr 13px; background:#f3f2f4;}
.viewtabs {grid-column:1 / 3; display:flex; align-items:center; background:#cbc9cb; color:#98979a;}
.viewtabs > .arrow {margin:0 2px 0 auto;}
.vtab {display:flex; align-items:center; gap:4px; padding:2px 4px 0; height:14px; white-space:nowrap;}
.vtab svg {width:9px; height:9px; color:#666;}
.vtab.current {background:#fff; width:87px; gap:5px; color:#b0afb2;}
.vtab button svg {width:8px; height:8px; color:#222; stroke-width:1.5;}
.canvas {position:relative; background:#fff; overflow:hidden;}
.scene {width:100%; height:100%;}
.wall {stroke:#08305f; stroke-width:1;}
.wall .face {fill:#0080ff; stroke:none;}
.wall .hole {fill:#fff; stroke:none;}
.cutoff {fill:#e6f1fb; stroke:#222;}
.balcony {fill:#3c64d7; fill-opacity:.44; stroke:#3a5cc0; stroke-width:1;}
.balcony .side {fill-opacity:.62;}
.balcony .edge {fill:none; stroke-opacity:.6;}
.balcony .deep {fill-opacity:.35; stroke:none;}
.balcony .rim {fill:none; stroke:#2650b8; stroke-width:1;}
.balcony .dash {stroke-dasharray:3 1;}
.post {fill-opacity:.5; stroke:#2f55b8;}
.pointer {fill:#fff; stroke:#222; stroke-width:1;}
.viewcube {stroke:#5a86b8; stroke-width:1;}
.viewcube ellipse {stroke:#fff; stroke-opacity:.35; stroke-width:7;}
.viewcube .top {fill:#a3cdf6;}
.viewcube .front {fill:#8abcf0;}
.viewcube .side {fill:#74abe6;}
.viewcube .mark {stroke:#5f9ddc; stroke-width:2;}
.viewcube text {font-size:7px; fill:#4a79ac; stroke:none;}
.viewcube .right {font-size:4px;}
.navbar {position:absolute; right:1px; top:109px; width:21px; height:73px; padding:11px 0 8px; display:flex; flex-direction:column; align-items:center; justify-content:space-between; background:#4a9ff4; border:1px solid #3577bd; border-radius:3px; color:#4f86bb;}
.navbar svg {width:14px; height:14px; stroke-width:1;}
.navbar hr {width:100%; margin:0; border:0; border-top:1px solid #3c83cd;}
.vscroll {display:flex; flex-direction:column; align-items:center; justify-content:space-between; padding:5px 0 4px;}
.vscroll .thumb {width:9px; height:10px; background:#cbc9cb;}
.viewbar {grid-column:1 / 3; display:flex; align-items:center; color:#444;}
.viewbar .scale {width:50px; padding-left:16px;}
.viewbar button {width:13px;}
.viewbar svg {width:11px; height:11px;}
.viewbar .blue {color:#3b82c4;}
.viewbar .sun {color:#d29a2a;}
.viewbar .no {stroke:#c23b2e; stroke-width:2;}
.viewbar .back {margin-left:7px;}
.hscroll {flex:1; display:flex; align-items:center; justify-content:flex-end; gap:268px;}
.hscroll .thumb {width:10px; height:10px; background:#cbc9cb;}
.viewbar .grip {margin:4px 1px 0 6px;}

/* status bar */
.status {flex:none; height:16px; display:flex; align-items:center; gap:5px; border-top:1px solid #b9b8ba;}
.status svg {width:11px; height:11px;}
.status .ready {width:373px;}
.status .drop {width:129px; margin-left:-1px;}
.status select {height:13px; border:0; background:#fff;}
.status .drop::after {border-color:#aaa;}
.count {display:flex; align-items:center; gap:2px; width:29px; color:#444;}
.filters {margin-left:auto; margin-right:41px; display:flex; align-items:center; gap:5px; color:#8b8a8d;}
.filters .dim {color:#aaa9ac;}
.filters .count {gap:0; width:20px;}

/* type properties dialog */
.dialog {position:absolute; left:568px; top:138px; width:284px; padding:0 4px 5px; background:#fff; border:1px solid #c9c8ca;}
.dlghead {position:relative; height:19px; font-size:8px; line-height:22px; text-align:center;}
.dlghead button {position:absolute; right:0; top:0; width:20px; height:13px; background:#c75050; color:#fff;}
.dlghead svg {width:8px; height:8px;}
.dlgbody {position:relative; background:#f0eff1; padding:6px 9px 6px 12px; border:1px solid #e9e8ea;}
.fields {display:grid; grid-template-columns:43px 134px 1fr; row-gap:6px; align-items:center;}
.fields label {line-height:14px;}
.fields button {margin-left:9px;}
.fields button, .buttons button {height:14px; border:1px solid #b5b4b6; background:#eceaed;}
.rename {grid-column:3;}
.dlgbody p {margin:5px 0 2px;}
.tablebox {height:236px; display:flex; overflow:hidden; border-top:1px solid #555;}
.tablebox table {width:240px; border-left:1px solid #666; background:#fff; align-self:flex-start;}
.tablebox .name {width:111px;}
.tablebox .end {width:8px;}
.tablebox .head th {height:13px; background:#f0eff1; text-align:center; border:solid #555; border-width:0 1px 1px 0;}
.tablebox td {padding-left:2px;}
.tablebox td.focus {padding-left:1px;}
.tablebox td:last-child {padding:0;}
.tablebox .group th {height:12px; background:#9bb5d6; color:#16202c; font-weight:bold; padding-left:2px;}
.tablebox .group th:last-child {padding:0;}
.tablebox .gap td {height:3px; border:0; line-height:0;}
.dlgscroll {flex:1; display:flex; flex-direction:column; align-items:center; padding:5px 0 4px;}
.dlgscroll .thumb {width:9px; height:155px; margin-top:4px; background:#cbc9cb;}
.dlgscroll .down {margin-top:auto;}
.dlgbody > a {display:block; margin:7px 0 10px;}
.buttons {display:flex; gap:5px;}
.buttons button {flex:1;}
.buttons button:first-child {margin-right:16px;}
.buttons .ok {border-color:#3f9bd6;}
.buttons button:disabled {color:#a3a2a5; border-color:#dddcde;}
.dlgbody .grip {position:absolute; right:1px; bottom:1px;}
```
